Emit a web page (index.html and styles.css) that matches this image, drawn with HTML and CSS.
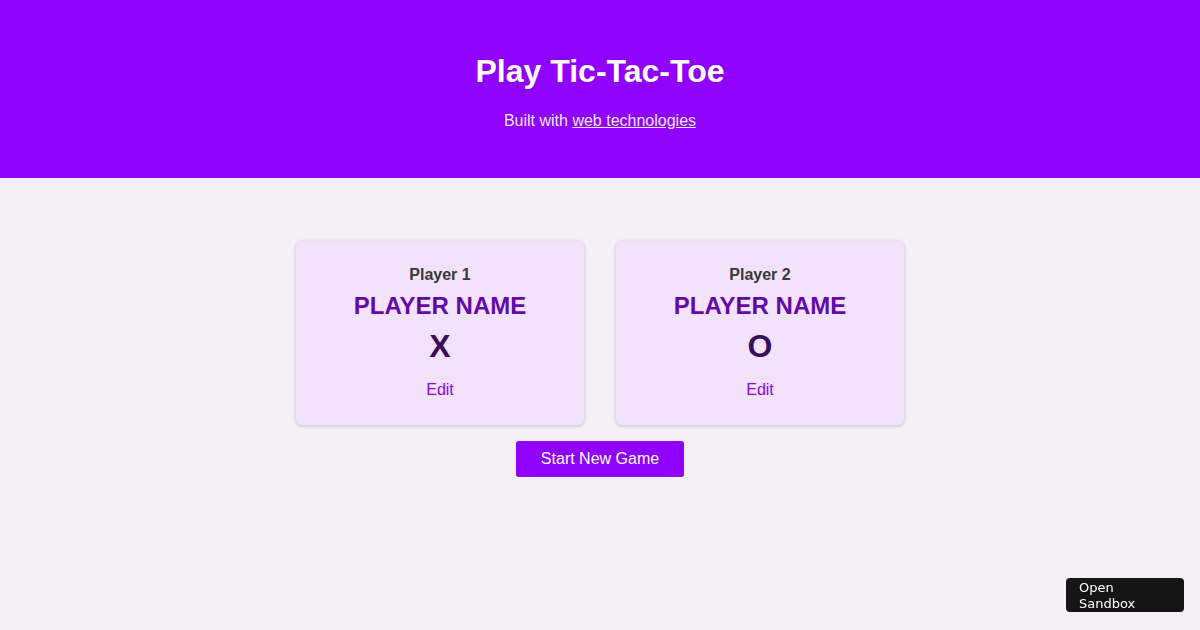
FILE: index.html
```html
<!DOCTYPE html>
<html lang="en">

<head>
    <meta charset="UTF-8">
    <meta name="viewport" content="width=device-width, initial-scale=1.0">
    <title>Tic-Tac-Toe</title>
    <link rel="stylesheet" href="styles.css">
</head>

<body>
    <header class="main-header">
        <h1>Play Tic-Tac-Toe</h1>
        <p>Built with <a href="#">web technologies</a></p>
    </header>

    <main>
        <ol class="players">
            <li class="player-card">
                <h2>Player 1</h2>
                <h3 class="player-name">PLAYER NAME</h3>
                <p class="player-symbol">X</p>
                <button class="btn-alt">Edit</button>
            </li>
            <li class="player-card">
                <h2>Player 2</h2>
                <h3 class="player-name">PLAYER NAME</h3>
                <p class="player-symbol">O</p>
                <button class="btn-alt">Edit</button>
            </li>
        </ol>

        <div class="actions">
            <button class="btn">Start New Game</button>
        </div>
    </main>

    <a class="sandbox-link" href="#">Open Sandbox</a>
</body>

</html>
```

FILE: styles.css
```css
/* Reset and base styles */
* {
    box-sizing: border-box;
    margin: 0;
    padding: 0;
}

body {
    font-family: "Liberation Sans", Arial, sans-serif;
    background-color: #f5eff7;
    color: #333;
    min-height: 630px;
}

/* Header */
.main-header {
    background-color: #8f00ff;
    color: #fff;
    text-align: center;
    padding: 53px 0 48px;
}

.main-header h1 {
    font-size: 32px;
}

.main-header p {
    margin-top: 22px;
    font-size: 16px;
    color: #f3e8ff;
}

.main-header a {
    color: #f3e8ff;
}

/* Players */
main {
    padding-top: 63px;
}

.players {
    list-style: none;
    display: flex;
    justify-content: center;
    gap: 32px;
}

.player-card {
    width: 288px;
    height: 184px;
    padding: 25px 16px 0;
    background-color: #f3e2fd;
    border-radius: 6px;
    box-shadow: 0 1px 4px rgba(0, 0, 0, 0.2);
    text-align: center;
}

.player-card h2 {
    font-size: 16px;
    color: #383838;
}

.player-name {
    margin-top: 8px;
    font-size: 24px;
    color: #6209a6;
}

.player-symbol {
    margin-top: 8px;
    font-size: 32px;
    font-weight: bold;
    color: #3a0b5c;
}

.btn-alt {
    margin-top: 16px;
    background: none;
    border: none;
    font: inherit;
    font-size: 16px;
    color: #8f00ff;
    cursor: pointer;
}

/* Actions */
.actions {
    display: flex;
    justify-content: center;
    margin-top: 16px;
}

.btn {
    width: 168px;
    height: 36px;
    background-color: #8f00ff;
    color: #fff;
    border: none;
    border-radius: 3px;
    font: inherit;
    font-size: 16px;
    cursor: pointer;
}

/* Sandbox link */
.sandbox-link {
    position: fixed;
    right: 16px;
    bottom: 18px;
    width: 118px;
    height: 34px;
    padding: 2px 13px 0;
    background-color: #151515;
    border-radius: 4px;
    color: #fff;
    font-family: "DejaVu Sans", sans-serif;
    font-size: 13px;
    line-height: 16px;
    text-decoration: none;
}
```
